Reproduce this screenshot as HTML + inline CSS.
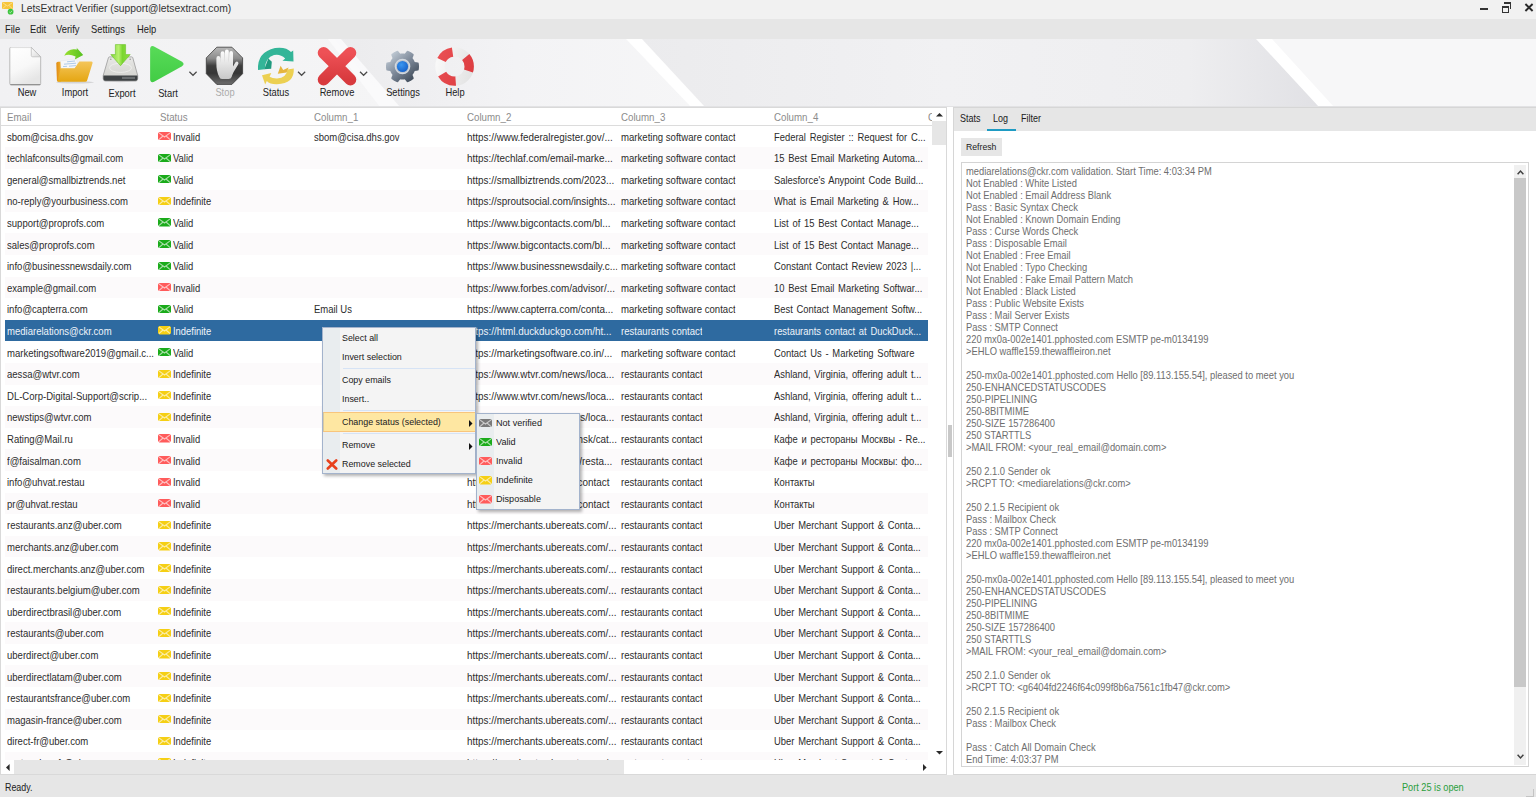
<!DOCTYPE html>
<html><head><meta charset="utf-8"><title>LetsExtract Verifier</title>
<style>
*{box-sizing:border-box;margin:0;padding:0}
html,body{width:1536px;height:797px;overflow:hidden;background:#f0f0f0;font-family:"Liberation Sans",sans-serif;color:#2c2c2c}
.abs{position:absolute}
#title{position:absolute;left:0;top:0;width:1536px;height:19px;background:#f1f1f1}
#title .t{position:absolute;left:21px;top:3px;font-size:10.3px;color:#333;white-space:nowrap}
#menu{position:absolute;left:0;top:19px;width:1536px;height:19.7px;background:#e6e6e6}
#menu span{position:absolute;top:4.1px;font-size:10.6px;color:#202020;transform:scaleX(0.885);transform-origin:0 0;white-space:nowrap}
#tb{position:absolute;left:0;top:38.7px;width:1536px;height:68.3px;background:#f2f2f4;border-bottom:1px solid #e2e2e4;overflow:hidden}
.lbl{position:absolute;top:47.3px;width:60px;text-align:center;font-size:10.6px;color:#222;white-space:nowrap;transform:scaleX(0.88);transform-origin:50% 0}
#grid{position:absolute;left:0;top:107px;width:947px;height:668px;background:#fff;border:1px solid #d9d9d9;overflow:hidden}
.hdr{position:absolute;top:2.6px;font-size:10.7px;color:#8c8c8c;white-space:nowrap;transform:scaleX(0.91);transform-origin:0 0}
#hline{position:absolute;left:0;top:17px;width:932px;height:1px;background:#dcdcdc}
.row{position:absolute;left:4.6px;width:923.4px;height:21.6px}
.row.alt{background:#fcfafb}
.row.sel{background:#2e6aa0;color:#eef4fa}
.c{position:absolute;top:6.15px;font-size:10.4px;white-space:nowrap;overflow:hidden;line-height:11px;transform-origin:0 0}
.c0{width:164px;transform:scaleX(0.918)}
.c2{transform:scaleX(0.913)}
.c3{width:158px;transform:scaleX(0.952)}
.c4{transform:scaleX(0.923)}
.c5{width:171px;word-spacing:1.3px;transform:scaleX(0.904)}
.env{position:absolute;left:0px;top:0.5px}
.stt{position:absolute;left:14.8px;top:0;transform:scaleX(0.904);transform-origin:0 0}
.row .c1{width:150px;height:13px;top:6px;font-size:9.4px}
.row .c1 .stt{font-size:10.4px;top:0.15px}
#vsb{position:absolute;left:931.4px;top:0;width:14px;height:652px;background:#fff}
#hsb{position:absolute;left:0;top:652px;width:931.4px;height:14px;background:#fff}
#split{position:absolute;left:947px;top:107px;width:6px;height:668px;background:#fff}
#panel{position:absolute;left:953px;top:107px;width:583px;height:668px;background:#fff;border-left:1px solid #d6d6d6;border-top:1px solid #d6d6d6;border-bottom:1px solid #d6d6d6}
#tabs{position:absolute;left:0;top:0;width:583px;height:23px;background:#e6e6e6}
#tabs span{position:absolute;top:5.2px;font-size:10.1px;color:#202020;white-space:nowrap;transform:scaleX(0.89);transform-origin:0 0}
#refresh{position:absolute;left:7px;top:30px;width:41px;height:18px;background:#e6e6e6;color:#202020}
#refresh span{position:absolute;left:5px;top:3.2px;font-size:9.9px;white-space:nowrap;transform:scaleX(0.88);transform-origin:0 0}
#log{position:absolute;left:7.4px;top:53.5px;width:568px;height:605.5px;border:1px solid #d4d4d4;background:#fff;overflow:hidden}
.ll{position:absolute;left:4px;margin-top:2.1px;font-size:10.7px;color:#6e6e6e;white-space:pre;line-height:12px;transform:scaleX(0.876);transform-origin:0 0}
#status{position:absolute;left:0;top:775px;width:1536px;height:22px;background:#e6e6e6}
#ctx{position:absolute;left:322px;top:327px;width:154px;height:147px;background:#f4f4f4;border:1px solid #a3b3cc;box-shadow:2px 2px 3px rgba(0,0,0,0.3)}
#ctx .ic{position:absolute;left:0;top:0;width:17px;height:145px;background:#e9edef}
.mi{position:absolute;left:19px;margin-top:-0.7px;font-size:9.9px;color:#202020;white-space:nowrap;transform:scaleX(0.9);transform-origin:0 0}
.sep{position:absolute;left:20px;width:132px;height:1px;background:#d6e3f5}
.hl{position:absolute;left:0;top:83.5px;width:152px;height:20.5px;background:#fee7a2;border-top:1px solid #f8c57c;border-bottom:1px solid #f8c57c;border-left:1px solid #d8c8a0}
#sub{position:absolute;left:476px;top:412.5px;width:104px;height:97px;background:#f4f4f4;border:1px solid #a3b3cc;box-shadow:2px 2px 3px rgba(0,0,0,0.3)}
#sub .ic{position:absolute;left:0;top:0;width:17px;height:95px;background:#e9edef}
.si{position:absolute;left:19px;margin-top:-1.5px;font-size:9.9px;color:#202020;white-space:nowrap;transform:scaleX(0.92);transform-origin:0 0}
</style></head><body>

<div id="title">
  <svg class="abs" style="left:2px;top:1px" width="14" height="14" viewBox="0 0 14 14">
    <rect x="0" y="1" width="11" height="7" rx="1" fill="#f7c53a"/>
    <path d="M0.8 1.8 L5.5 5 L10.2 1.8 M0.8 7.5 L4 4.5 M10.2 7.5 L7 4.5" stroke="#fbe6a0" stroke-width="0.8" fill="none"/>
    <circle cx="8.6" cy="10.7" r="2.9" fill="#3ec43e"/><path d="M7.3 10.9 L8.3 11.8 L10 9.8" stroke="#d8f5d8" stroke-width="0.7" fill="none"/>
  </svg>
  <div class="t">LetsExtract Verifier (support@letsextract.com)</div>
  <div class="abs" style="left:1480px;top:8px;width:8px;height:2px;background:#333"></div>
  <div class="abs" style="left:1504px;top:2px;width:7px;height:6.5px;border-top:2px solid #333;border-right:1.3px solid #333"></div>
  <div class="abs" style="left:1501.5px;top:6px;width:7.5px;height:7px;border:1.3px solid #333;border-top-width:2px;background:#f1f1f1"></div>
  <svg class="abs" style="left:1524px;top:3px" width="10" height="9" viewBox="0 0 10 9"><path d="M1.4 1 L8.6 8 M8.6 1 L1.4 8" stroke="#2a2a2a" stroke-width="1.9"/></svg>
</div>

<div id="menu">
  <span style="left:5px">File</span><span style="left:29.7px">Edit</span><span style="left:56.3px">Verify</span><span style="left:91.1px">Settings</span><span style="left:136.6px">Help</span>
</div>

<div id="tb">
<svg class="abs" style="left:0;top:0.3px" width="1536" height="68" viewBox="0 39 1536 68">
<defs>
  <linearGradient id="gBgL" x1="0" x2="1" y1="0" y2="0"><stop offset="0" stop-color="#f1f1f3"/><stop offset="1" stop-color="#f5f5f6"/></linearGradient>
  <linearGradient id="gBgM" x1="0" x2="1" y1="0" y2="0"><stop offset="0" stop-color="#ebebed"/><stop offset="0.5" stop-color="#f3f3f5"/><stop offset="1" stop-color="#f6f6f7"/></linearGradient>
  <linearGradient id="gBgR" x1="0" x2="1" y1="0" y2="0"><stop offset="0" stop-color="#ebebed"/><stop offset="0.45" stop-color="#f1f1f3"/><stop offset="0.8" stop-color="#eeeef0"/><stop offset="1" stop-color="#e0e0e4"/></linearGradient>
  <linearGradient id="gPage" x1="0" x2="0.4" y1="0" y2="1"><stop offset="0" stop-color="#ffffff"/><stop offset="0.6" stop-color="#f8f8f8"/><stop offset="1" stop-color="#e6e6e6"/></linearGradient>
  <linearGradient id="gFold" x1="0" x2="1" y1="0" y2="1"><stop offset="0" stop-color="#ffffff"/><stop offset="1" stop-color="#d8d8d8"/></linearGradient>
  <linearGradient id="gFolder" x1="0" x2="0" y1="0" y2="1"><stop offset="0" stop-color="#f4c55a"/><stop offset="1" stop-color="#e5a612"/></linearGradient>
  <linearGradient id="gFolderBack" x1="0" x2="1" y1="0" y2="0"><stop offset="0" stop-color="#e08a10"/><stop offset="1" stop-color="#f0b030"/></linearGradient>
  <linearGradient id="gGreenArr" x1="0" x2="1" y1="0" y2="0"><stop offset="0" stop-color="#9ae030"/><stop offset="1" stop-color="#55c020"/></linearGradient>
  <linearGradient id="gDrive" x1="0" x2="0" y1="0" y2="1"><stop offset="0" stop-color="#e8e8e6"/><stop offset="1" stop-color="#d0d0cc"/></linearGradient>
  <linearGradient id="gDown" x1="0" x2="1" y1="0" y2="0"><stop offset="0" stop-color="#7fd83a"/><stop offset="0.4" stop-color="#b8f070"/><stop offset="0.6" stop-color="#7ad630"/><stop offset="1" stop-color="#8ee040"/></linearGradient>
  <linearGradient id="gStart" x1="0" x2="0" y1="0" y2="1"><stop offset="0" stop-color="#58db58"/><stop offset="1" stop-color="#42cc45"/></linearGradient>
  <linearGradient id="gStop" x1="0" x2="0" y1="0" y2="1"><stop offset="0" stop-color="#b8b8b8"/><stop offset="0.3" stop-color="#8c8c8c"/><stop offset="0.5" stop-color="#3e3e3e"/><stop offset="0.7" stop-color="#363636"/><stop offset="1" stop-color="#6e6e6e"/></linearGradient>
  <linearGradient id="gHand" x1="0" x2="0" y1="0" y2="1"><stop offset="0" stop-color="#ffffff"/><stop offset="1" stop-color="#c8c8c8"/></linearGradient>
  <linearGradient id="gX" x1="0" x2="0" y1="0" y2="1"><stop offset="0" stop-color="#ee5156"/><stop offset="1" stop-color="#d83a3e"/></linearGradient>
  <linearGradient id="gGear" x1="0" x2="1" y1="0" y2="1"><stop offset="0" stop-color="#b8c4d0"/><stop offset="1" stop-color="#3e4a58"/></linearGradient>
  <linearGradient id="gGear2" gradientUnits="userSpaceOnUse" x1="-12" y1="-14" x2="12" y2="14"><stop offset="0" stop-color="#c4ced8"/><stop offset="0.5" stop-color="#7c8898"/><stop offset="1" stop-color="#3c4856"/></linearGradient>
  <linearGradient id="gBuoyW" gradientUnits="userSpaceOnUse" x1="-19" y1="0" x2="19" y2="10"><stop offset="0" stop-color="#f8f8f8"/><stop offset="1" stop-color="#e2e2e2"/></linearGradient>
  <linearGradient id="gBuoyR" gradientUnits="userSpaceOnUse" x1="-19" y1="-10" x2="19" y2="10"><stop offset="0" stop-color="#ea5054"/><stop offset="1" stop-color="#dc3c40"/></linearGradient>
  <radialGradient id="gBlue" cx="0.4" cy="0.35" r="0.7"><stop offset="0" stop-color="#3a96f0"/><stop offset="1" stop-color="#1660c8"/></radialGradient>
</defs>
<rect x="0" y="39" width="1536" height="68" fill="#f2f2f4"/>
<polygon points="0,39 334,39 390,107 0,107" fill="url(#gBgL)"/>
<polygon points="334,39 634,39 698,107 390,107" fill="url(#gBgM)"/>
<polygon points="634,39 1264,39 1327,107 698,107" fill="url(#gBgR)"/>
<polygon points="1264,39 1536,39 1536,107 1327,107" fill="#f7f7f8"/>
<polygon points="328,39 341,39 400,107 380,107" fill="#fbfbfc" opacity="0.9"/>
<polygon points="626,39 642,39 705,107 691,107" fill="#ffffff"/>
<polygon points="1256,39 1272,39 1334,107 1319,107" fill="#ffffff"/>

<!-- New -->
<path d="M10.5 47.5 H31.3 L40.7 56.8 V83.5 Q40.7 85 39.2 85 H11.3 Q9.8 85 9.8 83.5 V48.3 Q9.8 47.5 10.5 47.5 Z" fill="url(#gPage)" stroke="#b4b4b4" stroke-width="0.9"/>
<path d="M10.6 47.6 H31" stroke="#e4e4e4" stroke-width="1"/>
<path d="M10.3 84.6 H40.3" stroke="#8c8c8c" stroke-width="1"/>
<path d="M31.3 47.5 V55.5 Q31.3 56.8 32.6 56.8 H40.7 Z" fill="url(#gFold)" stroke="#b8b8b8" stroke-width="0.7"/>

<!-- Import -->
<ellipse cx="75" cy="82.3" rx="19" ry="1.2" fill="#000" opacity="0.12"/>
<path d="M56.3 63.5 Q56.3 61.8 58 61.8 H61 V81.5 H58 Q57 81.5 56.9 80 Z" fill="url(#gFolderBack)"/>
<path d="M60.5 61 L76.5 58.8 L78.5 68 L61 69 Z" fill="#f6f7f9" stroke="#dde0e4" stroke-width="0.4"/>
<path d="M67 61.8 L75 61 M64 64.2 L76 63.2 M63 66.6 L67 66.3 M69 66.2 L76 65.6" stroke="#9cbfe6" stroke-width="0.8"/>
<path d="M57.6 81.7 L60.8 68.2 L74.6 68.2 L79.3 61.6 L91.5 61.6 Q93 61.6 92.5 63.2 L87.2 80.2 Q86.8 81.7 85.3 81.7 Z" fill="url(#gFolder)"/>
<path d="M64.2 55.8 Q68 47.5 77.2 49.6 L76.4 47.6 L83.2 54.9 L74.8 59.4 L75.6 56.4 Q69 53.5 64.2 55.8 Z" fill="url(#gGreenArr)"/>

<!-- Export -->
<ellipse cx="120.5" cy="81" rx="17" ry="1.2" fill="#000" opacity="0.12"/>
<path d="M109.5 56.9 H131.7 Q132.5 56.9 132.8 57.8 L137.7 75.5 V78.8 Q137.7 80.8 135.7 80.8 H105.2 Q103.2 80.8 103.2 78.8 V75.5 L108.4 57.8 Q108.7 56.9 109.5 56.9 Z" fill="url(#gDrive)" stroke="#9a9a9a" stroke-width="0.8"/>
<path d="M103.4 75.4 H137.5 V78.8 Q137.5 80.8 135.5 80.8 H105.4 Q103.4 80.8 103.4 78.8 Z" fill="#3e4244"/>
<ellipse cx="120.5" cy="67.8" rx="11" ry="4.6" fill="none" stroke="#f6f6f4" stroke-width="0.8" opacity="0.8"/>
<circle cx="110.8" cy="59.2" r="0.8" fill="#9a9a9a"/><circle cx="130.2" cy="59.2" r="0.8" fill="#9a9a9a"/>
<rect x="122" y="76.8" width="13" height="2.2" fill="#6a6e70"/>
<path d="M115.4 44.6 H125.6 V54.6 H130.2 L120.5 65.7 L110.8 54.6 H115.4 Z" fill="url(#gDown)" stroke="#6cc02a" stroke-width="0.6"/>

<!-- Start -->
<path d="M150.1 49.8 Q150.1 44.3 155 46.9 L181.6 61.6 Q185.6 64.1 181.6 66.6 L155 81.3 Q150.1 83.9 150.1 78.4 Z" fill="url(#gStart)"/>
<path d="M189.4 71.8 L193 75.3 L196.6 71.8" fill="none" stroke="#4a4a4a" stroke-width="1.2"/>

<!-- Stop -->
<path d="M216.8 47.2 H231.9 L242.6 57.9 V73.7 L231.9 84.4 H216.8 L206.3 73.7 V57.9 Z" fill="url(#gStop)" stroke="#3a3a3a" stroke-width="0.8"/>
<path d="M219.2 76.8 Q216.2 71 216.4 63 V58.2 Q216.4 56 218.4 56 Q220.3 56 220.3 58.2 V63.5 L220.6 53.2 Q220.7 51.2 222.6 51.2 Q224.5 51.2 224.5 53.2 L224.6 62.5 L224.9 51.6 Q225 49.6 226.9 49.6 Q228.8 49.6 228.8 51.6 L228.9 62.5 L229.2 53 Q229.3 51 231.1 51 Q233 51 233 53 V66.5 L235.3 62.6 Q236.7 60.9 238 62 Q239 63 238 64.8 L233.6 72 Q232.4 74.5 231.6 77 Q230.9 79 228.6 79 H222 Q219.8 79 219.2 76.8 Z" fill="url(#gHand)"/>

<!-- Status -->
<path d="M258 70 Q257 52 275 48 Q286 46.5 291 52 L293.2 50.6 L293.5 61.6 L282.5 60.8 L285.2 58.4 Q280 53.5 274 55 Q265.5 57.5 264.7 69.2 Z" fill="#33b598"/>
<path d="M264.3 69.2 L268.3 58.6 L271.8 61.8 L271.2 68.8 Z" fill="#1f9a7e"/>
<path d="M293.8 68.6 Q294.5 84 277 84.2 Q270 84.4 266.8 81 L265.2 84.6 L262 75.2 L271.3 73 L269.6 76.7 Q272.5 78.6 277 78.5 Q286.5 78 287.5 69.5 Z" fill="#ecd052"/>
<path d="M277.8 73.8 L280.6 65.8 L283.2 70 L288.6 67.4 L286.6 72.6 Z" fill="#e6b53c"/>
<path d="M298 71.8 L301.6 75.3 L305.2 71.8" fill="none" stroke="#4a4a4a" stroke-width="1.2"/>

<!-- Remove -->
<path d="M323.6 52.8 L337 66.2 L350.4 52.8 M323.6 79.6 L337 66.2 L350.4 79.6" fill="none" stroke="url(#gX)" stroke-width="11.8" stroke-linecap="round" stroke-linejoin="round"/>
<path d="M360 71.8 L363.6 75.3 L367.2 71.8" fill="none" stroke="#4a4a4a" stroke-width="1.2"/>

<!-- Settings gear -->
<g transform="translate(402.5 66.5)">
  <path fill="url(#gGear2)" d="M16.50 0.00 L16.50 0.29 L16.49 0.58 L16.48 0.86 L16.46 1.15 L16.44 1.44 L16.41 1.72 L16.38 2.01 L16.34 2.30 L16.30 2.58 L16.25 2.87 L16.20 3.15 L16.14 3.43 L15.96 3.68 L15.58 3.88 L15.06 4.04 L14.46 4.15 L13.83 4.23 L13.23 4.30 L12.71 4.38 L12.33 4.49 L12.14 4.66 L12.05 4.87 L11.97 5.08 L11.88 5.29 L11.78 5.49 L11.68 5.70 L11.58 5.90 L11.48 6.10 L11.37 6.30 L11.26 6.50 L11.14 6.70 L11.02 6.89 L10.90 7.08 L10.78 7.27 L10.65 7.46 L10.52 7.64 L10.38 7.82 L10.24 8.00 L10.10 8.18 L10.05 8.43 L10.14 8.82 L10.34 9.31 L10.58 9.86 L10.82 10.45 L11.03 11.03 L11.16 11.55 L11.17 11.98 L11.04 12.26 L10.82 12.45 L10.61 12.64 L10.38 12.82 L10.16 13.00 L9.93 13.18 L9.70 13.35 L9.46 13.52 L9.23 13.68 L8.99 13.84 L8.74 13.99 L8.50 14.14 L8.25 14.29 L8.00 14.43 L7.75 14.57 L7.49 14.70 L7.23 14.83 L6.97 14.95 L6.71 15.07 L6.45 15.19 L6.18 15.30 L5.91 15.40 L5.64 15.50 L5.37 15.60 L5.10 15.69 L4.79 15.66 L4.43 15.44 L4.04 15.06 L3.64 14.59 L3.25 14.09 L2.89 13.60 L2.56 13.19 L2.28 12.92 L2.03 12.84 L1.81 12.87 L1.58 12.90 L1.36 12.93 L1.13 12.95 L0.91 12.97 L0.68 12.98 L0.45 12.99 L0.23 13.00 L0.00 13.00 L-0.23 13.00 L-0.45 12.99 L-0.68 12.98 L-0.91 12.97 L-1.13 12.95 L-1.36 12.93 L-1.58 12.90 L-1.81 12.87 L-2.03 12.84 L-2.28 12.92 L-2.56 13.19 L-2.89 13.60 L-3.25 14.09 L-3.64 14.59 L-4.04 15.06 L-4.43 15.44 L-4.79 15.66 L-5.10 15.69 L-5.37 15.60 L-5.64 15.50 L-5.91 15.40 L-6.18 15.30 L-6.45 15.19 L-6.71 15.07 L-6.97 14.95 L-7.23 14.83 L-7.49 14.70 L-7.75 14.57 L-8.00 14.43 L-8.25 14.29 L-8.50 14.14 L-8.74 13.99 L-8.99 13.84 L-9.23 13.68 L-9.46 13.52 L-9.70 13.35 L-9.93 13.18 L-10.16 13.00 L-10.38 12.82 L-10.61 12.64 L-10.82 12.45 L-11.04 12.26 L-11.17 11.98 L-11.16 11.55 L-11.03 11.03 L-10.82 10.45 L-10.58 9.86 L-10.34 9.31 L-10.14 8.82 L-10.05 8.43 L-10.10 8.18 L-10.24 8.00 L-10.38 7.82 L-10.52 7.64 L-10.65 7.46 L-10.78 7.27 L-10.90 7.08 L-11.02 6.89 L-11.14 6.70 L-11.26 6.50 L-11.37 6.30 L-11.48 6.10 L-11.58 5.90 L-11.68 5.70 L-11.78 5.49 L-11.88 5.29 L-11.97 5.08 L-12.05 4.87 L-12.14 4.66 L-12.33 4.49 L-12.71 4.38 L-13.23 4.30 L-13.83 4.23 L-14.46 4.15 L-15.06 4.04 L-15.58 3.88 L-15.96 3.68 L-16.14 3.43 L-16.20 3.15 L-16.25 2.87 L-16.30 2.58 L-16.34 2.30 L-16.38 2.01 L-16.41 1.72 L-16.44 1.44 L-16.46 1.15 L-16.48 0.86 L-16.49 0.58 L-16.50 0.29 L-16.50 0.00 L-16.50 -0.29 L-16.49 -0.58 L-16.48 -0.86 L-16.46 -1.15 L-16.44 -1.44 L-16.41 -1.72 L-16.38 -2.01 L-16.34 -2.30 L-16.30 -2.58 L-16.25 -2.87 L-16.20 -3.15 L-16.14 -3.43 L-15.96 -3.68 L-15.58 -3.88 L-15.06 -4.04 L-14.46 -4.15 L-13.83 -4.23 L-13.23 -4.30 L-12.71 -4.38 L-12.33 -4.49 L-12.14 -4.66 L-12.05 -4.87 L-11.97 -5.08 L-11.88 -5.29 L-11.78 -5.49 L-11.68 -5.70 L-11.58 -5.90 L-11.48 -6.10 L-11.37 -6.30 L-11.26 -6.50 L-11.14 -6.70 L-11.02 -6.89 L-10.90 -7.08 L-10.78 -7.27 L-10.65 -7.46 L-10.52 -7.64 L-10.38 -7.82 L-10.24 -8.00 L-10.10 -8.18 L-10.05 -8.43 L-10.14 -8.82 L-10.34 -9.31 L-10.58 -9.86 L-10.82 -10.45 L-11.03 -11.03 L-11.16 -11.55 L-11.17 -11.98 L-11.04 -12.26 L-10.82 -12.45 L-10.61 -12.64 L-10.38 -12.82 L-10.16 -13.00 L-9.93 -13.18 L-9.70 -13.35 L-9.46 -13.52 L-9.23 -13.68 L-8.99 -13.84 L-8.74 -13.99 L-8.50 -14.14 L-8.25 -14.29 L-8.00 -14.43 L-7.75 -14.57 L-7.49 -14.70 L-7.23 -14.83 L-6.97 -14.95 L-6.71 -15.07 L-6.45 -15.19 L-6.18 -15.30 L-5.91 -15.40 L-5.64 -15.50 L-5.37 -15.60 L-5.10 -15.69 L-4.79 -15.66 L-4.43 -15.44 L-4.04 -15.06 L-3.64 -14.59 L-3.25 -14.09 L-2.89 -13.60 L-2.56 -13.19 L-2.28 -12.92 L-2.03 -12.84 L-1.81 -12.87 L-1.58 -12.90 L-1.36 -12.93 L-1.13 -12.95 L-0.91 -12.97 L-0.68 -12.98 L-0.45 -12.99 L-0.23 -13.00 L-0.00 -13.00 L0.23 -13.00 L0.45 -12.99 L0.68 -12.98 L0.91 -12.97 L1.13 -12.95 L1.36 -12.93 L1.58 -12.90 L1.81 -12.87 L2.03 -12.84 L2.28 -12.92 L2.56 -13.19 L2.89 -13.60 L3.25 -14.09 L3.64 -14.59 L4.04 -15.06 L4.43 -15.44 L4.79 -15.66 L5.10 -15.69 L5.37 -15.60 L5.64 -15.50 L5.91 -15.40 L6.18 -15.30 L6.45 -15.19 L6.71 -15.07 L6.97 -14.95 L7.23 -14.83 L7.49 -14.70 L7.75 -14.57 L8.00 -14.43 L8.25 -14.29 L8.50 -14.14 L8.74 -13.99 L8.99 -13.84 L9.23 -13.68 L9.46 -13.52 L9.70 -13.35 L9.93 -13.18 L10.16 -13.00 L10.38 -12.82 L10.61 -12.64 L10.82 -12.45 L11.04 -12.26 L11.17 -11.98 L11.16 -11.55 L11.03 -11.03 L10.82 -10.45 L10.58 -9.86 L10.34 -9.31 L10.14 -8.82 L10.05 -8.43 L10.10 -8.18 L10.24 -8.00 L10.38 -7.82 L10.52 -7.64 L10.65 -7.46 L10.78 -7.27 L10.90 -7.08 L11.02 -6.89 L11.14 -6.70 L11.26 -6.50 L11.37 -6.30 L11.48 -6.10 L11.58 -5.90 L11.68 -5.70 L11.78 -5.49 L11.88 -5.29 L11.97 -5.08 L12.05 -4.87 L12.14 -4.66 L12.33 -4.49 L12.71 -4.38 L13.23 -4.30 L13.83 -4.23 L14.46 -4.15 L15.06 -4.04 L15.58 -3.88 L15.96 -3.68 L16.14 -3.43 L16.20 -3.15 L16.25 -2.87 L16.30 -2.58 L16.34 -2.30 L16.38 -2.01 L16.41 -1.72 L16.44 -1.44 L16.46 -1.15 L16.48 -0.86 L16.49 -0.58 L16.50 -0.29 Z"/>
  <circle r="7.8" fill="#d3d9e0"/>
  <circle r="6.6" fill="#bcc5cf"/>
  <circle r="5.6" fill="url(#gBlue)"/>
</g>

<!-- Help lifebuoy -->
<g transform="translate(454.6 66.5)">
  <circle r="14.6" fill="none" stroke="url(#gBuoyW)" stroke-width="9.4"/>
  <circle r="14.6" fill="none" stroke="url(#gBuoyR)" stroke-width="9.4" stroke-dasharray="4.66 17.0 15.98 14.60 14.01 14.68 10.80 0"/>
</g>
</svg>
<span class="lbl" style="left:-3.5px;top:47.3px">New</span><span class="lbl" style="left:45.0px;top:47.3px">Import</span><span class="lbl" style="left:91.5px;top:48.8px">Export</span><span class="lbl" style="left:137.5px;top:48.8px">Start</span><span class="lbl" style="left:194.5px;top:47.3px;color:#ababab">Stop</span><span class="lbl" style="left:246.0px;top:47.3px">Status</span><span class="lbl" style="left:307.4px;top:47.3px">Remove</span><span class="lbl" style="left:372.5px;top:47.3px">Settings</span><span class="lbl" style="left:425.0px;top:47.3px">Help</span>
</div>

<div id="grid">
  <span class="hdr" style="left:6px">Email</span>
  <span class="hdr" style="left:159px">Status</span>
  <span class="hdr" style="left:312.6px">Column_1</span>
  <span class="hdr" style="left:466.2px">Column_2</span>
  <span class="hdr" style="left:619.8px">Column_3</span>
  <span class="hdr" style="left:773.4px">Column_4</span>
  <span class="hdr" style="left:927px;width:5px;overflow:hidden">Column_5</span>
  <div id="hline"></div>
  <div id="rows" class="abs" style="left:-1px;top:-108px;width:948px;height:760px">
<div class="row" style="top:125.4px"><span class="c c0" style="left:2.4px">sbom@cisa.dhs.gov</span><span class="c c1" style="left:153.9px"><svg class="env" width="13" height="8.4" viewBox="0 0 13 8.4"><path d="M1.3 0 H11.7 L13 1.3 V7.1 L11.7 8.4 H1.3 L0 7.1 V1.3 Z" fill="#ff5b5b"/><path d="M0.9 0.9 L6.5 5 L12.1 0.9 M0.9 7.6 L5 4 M12.1 7.6 L8 4" stroke="#fff" stroke-opacity="0.62" stroke-width="1.15" fill="none"/></svg><span class="stt">Invalid</span></span><span class="c c2" style="left:309.0px">sbom@cisa.dhs.gov</span><span class="c c3" style="left:462.6px">https://www.federalregister.gov/...</span><span class="c c4" style="left:616.2px">marketing software contact</span><span class="c c5" style="left:769.8px">Federal Register :: Request for C...</span></div>
<div class="row alt" style="top:147.0px"><span class="c c0" style="left:2.4px">techlafconsults@gmail.com</span><span class="c c1" style="left:153.9px"><svg class="env" width="13" height="8.4" viewBox="0 0 13 8.4"><path d="M1.3 0 H11.7 L13 1.3 V7.1 L11.7 8.4 H1.3 L0 7.1 V1.3 Z" fill="#1aab1a"/><path d="M0.9 0.9 L6.5 5 L12.1 0.9 M0.9 7.6 L5 4 M12.1 7.6 L8 4" stroke="#fff" stroke-opacity="0.62" stroke-width="1.15" fill="none"/></svg><span class="stt">Valid</span></span><span class="c c3" style="left:462.6px">https://techlaf.com/email-marke...</span><span class="c c4" style="left:616.2px">marketing software contact</span><span class="c c5" style="left:769.8px">15 Best Email Marketing Automa...</span></div>
<div class="row" style="top:168.6px"><span class="c c0" style="left:2.4px">general@smallbiztrends.net</span><span class="c c1" style="left:153.9px"><svg class="env" width="13" height="8.4" viewBox="0 0 13 8.4"><path d="M1.3 0 H11.7 L13 1.3 V7.1 L11.7 8.4 H1.3 L0 7.1 V1.3 Z" fill="#1aab1a"/><path d="M0.9 0.9 L6.5 5 L12.1 0.9 M0.9 7.6 L5 4 M12.1 7.6 L8 4" stroke="#fff" stroke-opacity="0.62" stroke-width="1.15" fill="none"/></svg><span class="stt">Valid</span></span><span class="c c3" style="left:462.6px">https://smallbiztrends.com/2023...</span><span class="c c4" style="left:616.2px">marketing software contact</span><span class="c c5" style="left:769.8px">Salesforce's Anypoint Code Build...</span></div>
<div class="row alt" style="top:190.2px"><span class="c c0" style="left:2.4px">no-reply@yourbusiness.com</span><span class="c c1" style="left:153.9px"><svg class="env" width="13" height="8.4" viewBox="0 0 13 8.4"><path d="M1.3 0 H11.7 L13 1.3 V7.1 L11.7 8.4 H1.3 L0 7.1 V1.3 Z" fill="#f5cf14"/><path d="M0.9 0.9 L6.5 5 L12.1 0.9 M0.9 7.6 L5 4 M12.1 7.6 L8 4" stroke="#fff" stroke-opacity="0.62" stroke-width="1.15" fill="none"/></svg><span class="stt">Indefinite</span></span><span class="c c3" style="left:462.6px">https://sproutsocial.com/insights...</span><span class="c c4" style="left:616.2px">marketing software contact</span><span class="c c5" style="left:769.8px">What is Email Marketing &amp; How...</span></div>
<div class="row" style="top:211.8px"><span class="c c0" style="left:2.4px">support@proprofs.com</span><span class="c c1" style="left:153.9px"><svg class="env" width="13" height="8.4" viewBox="0 0 13 8.4"><path d="M1.3 0 H11.7 L13 1.3 V7.1 L11.7 8.4 H1.3 L0 7.1 V1.3 Z" fill="#1aab1a"/><path d="M0.9 0.9 L6.5 5 L12.1 0.9 M0.9 7.6 L5 4 M12.1 7.6 L8 4" stroke="#fff" stroke-opacity="0.62" stroke-width="1.15" fill="none"/></svg><span class="stt">Valid</span></span><span class="c c3" style="left:462.6px">https://www.bigcontacts.com/bl...</span><span class="c c4" style="left:616.2px">marketing software contact</span><span class="c c5" style="left:769.8px">List of 15 Best Contact Manage...</span></div>
<div class="row alt" style="top:233.4px"><span class="c c0" style="left:2.4px">sales@proprofs.com</span><span class="c c1" style="left:153.9px"><svg class="env" width="13" height="8.4" viewBox="0 0 13 8.4"><path d="M1.3 0 H11.7 L13 1.3 V7.1 L11.7 8.4 H1.3 L0 7.1 V1.3 Z" fill="#1aab1a"/><path d="M0.9 0.9 L6.5 5 L12.1 0.9 M0.9 7.6 L5 4 M12.1 7.6 L8 4" stroke="#fff" stroke-opacity="0.62" stroke-width="1.15" fill="none"/></svg><span class="stt">Valid</span></span><span class="c c3" style="left:462.6px">https://www.bigcontacts.com/bl...</span><span class="c c4" style="left:616.2px">marketing software contact</span><span class="c c5" style="left:769.8px">List of 15 Best Contact Manage...</span></div>
<div class="row" style="top:255.0px"><span class="c c0" style="left:2.4px">info@businessnewsdaily.com</span><span class="c c1" style="left:153.9px"><svg class="env" width="13" height="8.4" viewBox="0 0 13 8.4"><path d="M1.3 0 H11.7 L13 1.3 V7.1 L11.7 8.4 H1.3 L0 7.1 V1.3 Z" fill="#1aab1a"/><path d="M0.9 0.9 L6.5 5 L12.1 0.9 M0.9 7.6 L5 4 M12.1 7.6 L8 4" stroke="#fff" stroke-opacity="0.62" stroke-width="1.15" fill="none"/></svg><span class="stt">Valid</span></span><span class="c c3" style="left:462.6px">https://www.businessnewsdaily.c...</span><span class="c c4" style="left:616.2px">marketing software contact</span><span class="c c5" style="left:769.8px">Constant Contact Review 2023 |...</span></div>
<div class="row alt" style="top:276.6px"><span class="c c0" style="left:2.4px">example@gmail.com</span><span class="c c1" style="left:153.9px"><svg class="env" width="13" height="8.4" viewBox="0 0 13 8.4"><path d="M1.3 0 H11.7 L13 1.3 V7.1 L11.7 8.4 H1.3 L0 7.1 V1.3 Z" fill="#ff5b5b"/><path d="M0.9 0.9 L6.5 5 L12.1 0.9 M0.9 7.6 L5 4 M12.1 7.6 L8 4" stroke="#fff" stroke-opacity="0.62" stroke-width="1.15" fill="none"/></svg><span class="stt">Invalid</span></span><span class="c c3" style="left:462.6px">https://www.forbes.com/advisor/...</span><span class="c c4" style="left:616.2px">marketing software contact</span><span class="c c5" style="left:769.8px">10 Best Email Marketing Softwar...</span></div>
<div class="row" style="top:298.2px"><span class="c c0" style="left:2.4px">info@capterra.com</span><span class="c c1" style="left:153.9px"><svg class="env" width="13" height="8.4" viewBox="0 0 13 8.4"><path d="M1.3 0 H11.7 L13 1.3 V7.1 L11.7 8.4 H1.3 L0 7.1 V1.3 Z" fill="#1aab1a"/><path d="M0.9 0.9 L6.5 5 L12.1 0.9 M0.9 7.6 L5 4 M12.1 7.6 L8 4" stroke="#fff" stroke-opacity="0.62" stroke-width="1.15" fill="none"/></svg><span class="stt">Valid</span></span><span class="c c2" style="left:309.0px">Email Us</span><span class="c c3" style="left:462.6px">https://www.capterra.com/conta...</span><span class="c c4" style="left:616.2px">marketing software contact</span><span class="c c5" style="left:769.8px">Best Contact Management Softw...</span></div>
<div class="row sel" style="top:319.8px"><span class="c c0" style="left:2.4px">mediarelations@ckr.com</span><span class="c c1" style="left:153.9px"><svg class="env" width="13" height="8.4" viewBox="0 0 13 8.4"><path d="M1.3 0 H11.7 L13 1.3 V7.1 L11.7 8.4 H1.3 L0 7.1 V1.3 Z" fill="#f5cf14"/><path d="M0.9 0.9 L6.5 5 L12.1 0.9 M0.9 7.6 L5 4 M12.1 7.6 L8 4" stroke="#fff" stroke-opacity="0.62" stroke-width="1.15" fill="none"/></svg><span class="stt">Indefinite</span></span><span class="c c3" style="left:462.6px">https://html.duckduckgo.com/ht...</span><span class="c c4" style="left:616.2px">restaurants contact</span><span class="c c5" style="left:769.8px">restaurants contact at DuckDuck...</span></div>
<div class="row" style="top:341.4px"><span class="c c0" style="left:2.4px">marketingsoftware2019@gmail.c...</span><span class="c c1" style="left:153.9px"><svg class="env" width="13" height="8.4" viewBox="0 0 13 8.4"><path d="M1.3 0 H11.7 L13 1.3 V7.1 L11.7 8.4 H1.3 L0 7.1 V1.3 Z" fill="#1aab1a"/><path d="M0.9 0.9 L6.5 5 L12.1 0.9 M0.9 7.6 L5 4 M12.1 7.6 L8 4" stroke="#fff" stroke-opacity="0.62" stroke-width="1.15" fill="none"/></svg><span class="stt">Valid</span></span><span class="c c3" style="left:462.6px">https://marketingsoftware.co.in/...</span><span class="c c4" style="left:616.2px">marketing software contact</span><span class="c c5" style="left:769.8px">Contact Us - Marketing Software</span></div>
<div class="row alt" style="top:363.0px"><span class="c c0" style="left:2.4px">aessa@wtvr.com</span><span class="c c1" style="left:153.9px"><svg class="env" width="13" height="8.4" viewBox="0 0 13 8.4"><path d="M1.3 0 H11.7 L13 1.3 V7.1 L11.7 8.4 H1.3 L0 7.1 V1.3 Z" fill="#f5cf14"/><path d="M0.9 0.9 L6.5 5 L12.1 0.9 M0.9 7.6 L5 4 M12.1 7.6 L8 4" stroke="#fff" stroke-opacity="0.62" stroke-width="1.15" fill="none"/></svg><span class="stt">Indefinite</span></span><span class="c c3" style="left:462.6px">https://www.wtvr.com/news/loca...</span><span class="c c4" style="left:616.2px">restaurants contact</span><span class="c c5" style="left:769.8px">Ashland, Virginia, offering adult t...</span></div>
<div class="row" style="top:384.6px"><span class="c c0" style="left:2.4px">DL-Corp-Digital-Support@scrip...</span><span class="c c1" style="left:153.9px"><svg class="env" width="13" height="8.4" viewBox="0 0 13 8.4"><path d="M1.3 0 H11.7 L13 1.3 V7.1 L11.7 8.4 H1.3 L0 7.1 V1.3 Z" fill="#f5cf14"/><path d="M0.9 0.9 L6.5 5 L12.1 0.9 M0.9 7.6 L5 4 M12.1 7.6 L8 4" stroke="#fff" stroke-opacity="0.62" stroke-width="1.15" fill="none"/></svg><span class="stt">Indefinite</span></span><span class="c c3" style="left:462.6px">https://www.wtvr.com/news/loca...</span><span class="c c4" style="left:616.2px">restaurants contact</span><span class="c c5" style="left:769.8px">Ashland, Virginia, offering adult t...</span></div>
<div class="row alt" style="top:406.2px"><span class="c c0" style="left:2.4px">newstips@wtvr.com</span><span class="c c1" style="left:153.9px"><svg class="env" width="13" height="8.4" viewBox="0 0 13 8.4"><path d="M1.3 0 H11.7 L13 1.3 V7.1 L11.7 8.4 H1.3 L0 7.1 V1.3 Z" fill="#f5cf14"/><path d="M0.9 0.9 L6.5 5 L12.1 0.9 M0.9 7.6 L5 4 M12.1 7.6 L8 4" stroke="#fff" stroke-opacity="0.62" stroke-width="1.15" fill="none"/></svg><span class="stt">Indefinite</span></span><span class="c c3" style="left:462.6px">https://www.wtvr.com/news/loca...</span><span class="c c4" style="left:616.2px">restaurants contact</span><span class="c c5" style="left:769.8px">Ashland, Virginia, offering adult t...</span></div>
<div class="row" style="top:427.8px"><span class="c c0" style="left:2.4px">Rating@Mail.ru</span><span class="c c1" style="left:153.9px"><svg class="env" width="13" height="8.4" viewBox="0 0 13 8.4"><path d="M1.3 0 H11.7 L13 1.3 V7.1 L11.7 8.4 H1.3 L0 7.1 V1.3 Z" fill="#ff5b5b"/><path d="M0.9 0.9 L6.5 5 L12.1 0.9 M0.9 7.6 L5 4 M12.1 7.6 L8 4" stroke="#fff" stroke-opacity="0.62" stroke-width="1.15" fill="none"/></svg><span class="stt">Invalid</span></span><span class="c c3" style="left:462.6px">https://www.restoclub.ru/msk/cat...</span><span class="c c4" style="left:616.2px">restaurants contact</span><span class="c c5" style="left:769.8px">Кафе и рестораны Москвы - Re...</span></div>
<div class="row alt" style="top:449.4px"><span class="c c0" style="left:2.4px">f@faisalman.com</span><span class="c c1" style="left:153.9px"><svg class="env" width="13" height="8.4" viewBox="0 0 13 8.4"><path d="M1.3 0 H11.7 L13 1.3 V7.1 L11.7 8.4 H1.3 L0 7.1 V1.3 Z" fill="#ff5b5b"/><path d="M0.9 0.9 L6.5 5 L12.1 0.9 M0.9 7.6 L5 4 M12.1 7.6 L8 4" stroke="#fff" stroke-opacity="0.62" stroke-width="1.15" fill="none"/></svg><span class="stt">Invalid</span></span><span class="c c3" style="left:462.6px">https://www.afisha.ru/msk/resta...</span><span class="c c4" style="left:616.2px">restaurants contact</span><span class="c c5" style="left:769.8px">Кафе и рестораны Москвы: фо...</span></div>
<div class="row" style="top:471.0px"><span class="c c0" style="left:2.4px">info@uhvat.restau</span><span class="c c1" style="left:153.9px"><svg class="env" width="13" height="8.4" viewBox="0 0 13 8.4"><path d="M1.3 0 H11.7 L13 1.3 V7.1 L11.7 8.4 H1.3 L0 7.1 V1.3 Z" fill="#ff5b5b"/><path d="M0.9 0.9 L6.5 5 L12.1 0.9 M0.9 7.6 L5 4 M12.1 7.6 L8 4" stroke="#fff" stroke-opacity="0.62" stroke-width="1.15" fill="none"/></svg><span class="stt">Invalid</span></span><span class="c c3" style="left:462.6px">https://www.uhvat.restau/contact</span><span class="c c4" style="left:616.2px">restaurants contact</span><span class="c c5" style="left:769.8px">Контакты</span></div>
<div class="row alt" style="top:492.6px"><span class="c c0" style="left:2.4px">pr@uhvat.restau</span><span class="c c1" style="left:153.9px"><svg class="env" width="13" height="8.4" viewBox="0 0 13 8.4"><path d="M1.3 0 H11.7 L13 1.3 V7.1 L11.7 8.4 H1.3 L0 7.1 V1.3 Z" fill="#ff5b5b"/><path d="M0.9 0.9 L6.5 5 L12.1 0.9 M0.9 7.6 L5 4 M12.1 7.6 L8 4" stroke="#fff" stroke-opacity="0.62" stroke-width="1.15" fill="none"/></svg><span class="stt">Invalid</span></span><span class="c c3" style="left:462.6px">https://www.uhvat.restau/contact</span><span class="c c4" style="left:616.2px">restaurants contact</span><span class="c c5" style="left:769.8px">Контакты</span></div>
<div class="row" style="top:514.2px"><span class="c c0" style="left:2.4px">restaurants.anz@uber.com</span><span class="c c1" style="left:153.9px"><svg class="env" width="13" height="8.4" viewBox="0 0 13 8.4"><path d="M1.3 0 H11.7 L13 1.3 V7.1 L11.7 8.4 H1.3 L0 7.1 V1.3 Z" fill="#f5cf14"/><path d="M0.9 0.9 L6.5 5 L12.1 0.9 M0.9 7.6 L5 4 M12.1 7.6 L8 4" stroke="#fff" stroke-opacity="0.62" stroke-width="1.15" fill="none"/></svg><span class="stt">Indefinite</span></span><span class="c c3" style="left:462.6px">https://merchants.ubereats.com/...</span><span class="c c4" style="left:616.2px">restaurants contact</span><span class="c c5" style="left:769.8px">Uber Merchant Support &amp; Conta...</span></div>
<div class="row alt" style="top:535.8px"><span class="c c0" style="left:2.4px">merchants.anz@uber.com</span><span class="c c1" style="left:153.9px"><svg class="env" width="13" height="8.4" viewBox="0 0 13 8.4"><path d="M1.3 0 H11.7 L13 1.3 V7.1 L11.7 8.4 H1.3 L0 7.1 V1.3 Z" fill="#f5cf14"/><path d="M0.9 0.9 L6.5 5 L12.1 0.9 M0.9 7.6 L5 4 M12.1 7.6 L8 4" stroke="#fff" stroke-opacity="0.62" stroke-width="1.15" fill="none"/></svg><span class="stt">Indefinite</span></span><span class="c c3" style="left:462.6px">https://merchants.ubereats.com/...</span><span class="c c4" style="left:616.2px">restaurants contact</span><span class="c c5" style="left:769.8px">Uber Merchant Support &amp; Conta...</span></div>
<div class="row" style="top:557.4px"><span class="c c0" style="left:2.4px">direct.merchants.anz@uber.com</span><span class="c c1" style="left:153.9px"><svg class="env" width="13" height="8.4" viewBox="0 0 13 8.4"><path d="M1.3 0 H11.7 L13 1.3 V7.1 L11.7 8.4 H1.3 L0 7.1 V1.3 Z" fill="#f5cf14"/><path d="M0.9 0.9 L6.5 5 L12.1 0.9 M0.9 7.6 L5 4 M12.1 7.6 L8 4" stroke="#fff" stroke-opacity="0.62" stroke-width="1.15" fill="none"/></svg><span class="stt">Indefinite</span></span><span class="c c3" style="left:462.6px">https://merchants.ubereats.com/...</span><span class="c c4" style="left:616.2px">restaurants contact</span><span class="c c5" style="left:769.8px">Uber Merchant Support &amp; Conta...</span></div>
<div class="row alt" style="top:579.0px"><span class="c c0" style="left:2.4px">restaurants.belgium@uber.com</span><span class="c c1" style="left:153.9px"><svg class="env" width="13" height="8.4" viewBox="0 0 13 8.4"><path d="M1.3 0 H11.7 L13 1.3 V7.1 L11.7 8.4 H1.3 L0 7.1 V1.3 Z" fill="#f5cf14"/><path d="M0.9 0.9 L6.5 5 L12.1 0.9 M0.9 7.6 L5 4 M12.1 7.6 L8 4" stroke="#fff" stroke-opacity="0.62" stroke-width="1.15" fill="none"/></svg><span class="stt">Indefinite</span></span><span class="c c3" style="left:462.6px">https://merchants.ubereats.com/...</span><span class="c c4" style="left:616.2px">restaurants contact</span><span class="c c5" style="left:769.8px">Uber Merchant Support &amp; Conta...</span></div>
<div class="row" style="top:600.6px"><span class="c c0" style="left:2.4px">uberdirectbrasil@uber.com</span><span class="c c1" style="left:153.9px"><svg class="env" width="13" height="8.4" viewBox="0 0 13 8.4"><path d="M1.3 0 H11.7 L13 1.3 V7.1 L11.7 8.4 H1.3 L0 7.1 V1.3 Z" fill="#f5cf14"/><path d="M0.9 0.9 L6.5 5 L12.1 0.9 M0.9 7.6 L5 4 M12.1 7.6 L8 4" stroke="#fff" stroke-opacity="0.62" stroke-width="1.15" fill="none"/></svg><span class="stt">Indefinite</span></span><span class="c c3" style="left:462.6px">https://merchants.ubereats.com/...</span><span class="c c4" style="left:616.2px">restaurants contact</span><span class="c c5" style="left:769.8px">Uber Merchant Support &amp; Conta...</span></div>
<div class="row alt" style="top:622.2px"><span class="c c0" style="left:2.4px">restaurants@uber.com</span><span class="c c1" style="left:153.9px"><svg class="env" width="13" height="8.4" viewBox="0 0 13 8.4"><path d="M1.3 0 H11.7 L13 1.3 V7.1 L11.7 8.4 H1.3 L0 7.1 V1.3 Z" fill="#f5cf14"/><path d="M0.9 0.9 L6.5 5 L12.1 0.9 M0.9 7.6 L5 4 M12.1 7.6 L8 4" stroke="#fff" stroke-opacity="0.62" stroke-width="1.15" fill="none"/></svg><span class="stt">Indefinite</span></span><span class="c c3" style="left:462.6px">https://merchants.ubereats.com/...</span><span class="c c4" style="left:616.2px">restaurants contact</span><span class="c c5" style="left:769.8px">Uber Merchant Support &amp; Conta...</span></div>
<div class="row" style="top:643.8px"><span class="c c0" style="left:2.4px">uberdirect@uber.com</span><span class="c c1" style="left:153.9px"><svg class="env" width="13" height="8.4" viewBox="0 0 13 8.4"><path d="M1.3 0 H11.7 L13 1.3 V7.1 L11.7 8.4 H1.3 L0 7.1 V1.3 Z" fill="#f5cf14"/><path d="M0.9 0.9 L6.5 5 L12.1 0.9 M0.9 7.6 L5 4 M12.1 7.6 L8 4" stroke="#fff" stroke-opacity="0.62" stroke-width="1.15" fill="none"/></svg><span class="stt">Indefinite</span></span><span class="c c3" style="left:462.6px">https://merchants.ubereats.com/...</span><span class="c c4" style="left:616.2px">restaurants contact</span><span class="c c5" style="left:769.8px">Uber Merchant Support &amp; Conta...</span></div>
<div class="row alt" style="top:665.4px"><span class="c c0" style="left:2.4px">uberdirectlatam@uber.com</span><span class="c c1" style="left:153.9px"><svg class="env" width="13" height="8.4" viewBox="0 0 13 8.4"><path d="M1.3 0 H11.7 L13 1.3 V7.1 L11.7 8.4 H1.3 L0 7.1 V1.3 Z" fill="#f5cf14"/><path d="M0.9 0.9 L6.5 5 L12.1 0.9 M0.9 7.6 L5 4 M12.1 7.6 L8 4" stroke="#fff" stroke-opacity="0.62" stroke-width="1.15" fill="none"/></svg><span class="stt">Indefinite</span></span><span class="c c3" style="left:462.6px">https://merchants.ubereats.com/...</span><span class="c c4" style="left:616.2px">restaurants contact</span><span class="c c5" style="left:769.8px">Uber Merchant Support &amp; Conta...</span></div>
<div class="row" style="top:687.0px"><span class="c c0" style="left:2.4px">restaurantsfrance@uber.com</span><span class="c c1" style="left:153.9px"><svg class="env" width="13" height="8.4" viewBox="0 0 13 8.4"><path d="M1.3 0 H11.7 L13 1.3 V7.1 L11.7 8.4 H1.3 L0 7.1 V1.3 Z" fill="#f5cf14"/><path d="M0.9 0.9 L6.5 5 L12.1 0.9 M0.9 7.6 L5 4 M12.1 7.6 L8 4" stroke="#fff" stroke-opacity="0.62" stroke-width="1.15" fill="none"/></svg><span class="stt">Indefinite</span></span><span class="c c3" style="left:462.6px">https://merchants.ubereats.com/...</span><span class="c c4" style="left:616.2px">restaurants contact</span><span class="c c5" style="left:769.8px">Uber Merchant Support &amp; Conta...</span></div>
<div class="row alt" style="top:708.6px"><span class="c c0" style="left:2.4px">magasin-france@uber.com</span><span class="c c1" style="left:153.9px"><svg class="env" width="13" height="8.4" viewBox="0 0 13 8.4"><path d="M1.3 0 H11.7 L13 1.3 V7.1 L11.7 8.4 H1.3 L0 7.1 V1.3 Z" fill="#f5cf14"/><path d="M0.9 0.9 L6.5 5 L12.1 0.9 M0.9 7.6 L5 4 M12.1 7.6 L8 4" stroke="#fff" stroke-opacity="0.62" stroke-width="1.15" fill="none"/></svg><span class="stt">Indefinite</span></span><span class="c c3" style="left:462.6px">https://merchants.ubereats.com/...</span><span class="c c4" style="left:616.2px">restaurants contact</span><span class="c c5" style="left:769.8px">Uber Merchant Support &amp; Conta...</span></div>
<div class="row" style="top:730.2px"><span class="c c0" style="left:2.4px">direct-fr@uber.com</span><span class="c c1" style="left:153.9px"><svg class="env" width="13" height="8.4" viewBox="0 0 13 8.4"><path d="M1.3 0 H11.7 L13 1.3 V7.1 L11.7 8.4 H1.3 L0 7.1 V1.3 Z" fill="#f5cf14"/><path d="M0.9 0.9 L6.5 5 L12.1 0.9 M0.9 7.6 L5 4 M12.1 7.6 L8 4" stroke="#fff" stroke-opacity="0.62" stroke-width="1.15" fill="none"/></svg><span class="stt">Indefinite</span></span><span class="c c3" style="left:462.6px">https://merchants.ubereats.com/...</span><span class="c c4" style="left:616.2px">restaurants contact</span><span class="c c5" style="left:769.8px">Uber Merchant Support &amp; Conta...</span></div>
<div class="row alt" style="top:751.8px"><span class="c c0" style="left:2.4px">partenaires-fr@uber.com</span><span class="c c1" style="left:153.9px"><svg class="env" width="13" height="8.4" viewBox="0 0 13 8.4"><path d="M1.3 0 H11.7 L13 1.3 V7.1 L11.7 8.4 H1.3 L0 7.1 V1.3 Z" fill="#f5cf14"/><path d="M0.9 0.9 L6.5 5 L12.1 0.9 M0.9 7.6 L5 4 M12.1 7.6 L8 4" stroke="#fff" stroke-opacity="0.62" stroke-width="1.15" fill="none"/></svg><span class="stt">Indefinite</span></span><span class="c c3" style="left:462.6px">https://merchants.ubereats.com/...</span><span class="c c4" style="left:616.2px">restaurants contact</span><span class="c c5" style="left:769.8px">Uber Merchant Support &amp; Conta...</span></div>
  </div>
  <div id="vsb">
    <svg class="abs" style="left:3.5px;top:4.5px" width="7" height="4" viewBox="0 0 7 4"><path d="M0 3.6 L3.5 0 L7 3.6 Z" fill="#2a2a2a"/></svg>
    <div class="abs" style="left:0;top:13px;width:14px;height:23.5px;background:#e6e6e6"></div>
    <svg class="abs" style="left:3.5px;top:643px" width="7" height="4" viewBox="0 0 7 4"><path d="M0 0 L3.5 3.6 L7 0 Z" fill="#2a2a2a"/></svg>
  </div>
  <div id="hsb">
    <svg class="abs" style="left:4.5px;top:3.5px" width="4" height="7" viewBox="0 0 4 7"><path d="M3.6 0 L0 3.5 L3.6 7 Z" fill="#2a2a2a"/></svg>
    <div class="abs" style="left:13px;top:0;width:609.5px;height:13.5px;background:#e6e6e6"></div>
    <svg class="abs" style="left:922px;top:3.5px" width="4" height="7" viewBox="0 0 4 7"><path d="M0 0 L3.6 3.5 L0 7 Z" fill="#2a2a2a"/></svg>
  </div>
</div>

<div id="split"><div class="abs" style="left:1.3px;top:317.6px;width:3.6px;height:32.2px;background:#c8c8c8"></div></div>

<div id="panel">
  <div id="tabs">
    <span style="left:6px">Stats</span><span style="left:39px">Log</span><span style="left:67px">Filter</span>
    <div class="abs" style="left:33px;top:21px;width:29px;height:2px;background:#1e9bc3"></div>
  </div>
  <div id="refresh"><span>Refresh</span></div>
  <div id="log">
<div class="ll" style="top:0px">mediarelations@ckr.com validation. Start Time: 4:03:34 PM</div><div class="ll" style="top:12px">Not Enabled : White Listed</div><div class="ll" style="top:24px">Not Enabled : Email Address Blank</div><div class="ll" style="top:36px">Pass : Basic Syntax Check</div><div class="ll" style="top:48px">Not Enabled : Known Domain Ending</div><div class="ll" style="top:60px">Pass : Curse Words Check</div><div class="ll" style="top:72px">Pass : Disposable Email</div><div class="ll" style="top:84px">Not Enabled : Free Email</div><div class="ll" style="top:96px">Not Enabled : Typo Checking</div><div class="ll" style="top:108px">Not Enabled : Fake Email Pattern Match</div><div class="ll" style="top:120px">Not Enabled : Black Listed</div><div class="ll" style="top:132px">Pass : Public Website Exists</div><div class="ll" style="top:144px">Pass : Mail Server Exists</div><div class="ll" style="top:156px">Pass : SMTP Connect</div><div class="ll" style="top:168px">220 mx0a-002e1401.pphosted.com ESMTP pe-m0134199</div><div class="ll" style="top:180px">&gt;EHLO waffle159.thewaffleiron.net</div><div class="ll" style="top:192px">&nbsp;</div><div class="ll" style="top:204px">250-mx0a-002e1401.pphosted.com Hello [89.113.155.54], pleased to meet you</div><div class="ll" style="top:216px">250-ENHANCEDSTATUSCODES</div><div class="ll" style="top:228px">250-PIPELINING</div><div class="ll" style="top:240px">250-8BITMIME</div><div class="ll" style="top:252px">250-SIZE 157286400</div><div class="ll" style="top:264px">250 STARTTLS</div><div class="ll" style="top:276px">&gt;MAIL FROM: &lt;your_real_email@domain.com&gt;</div><div class="ll" style="top:288px">&nbsp;</div><div class="ll" style="top:300px">250 2.1.0 Sender ok</div><div class="ll" style="top:312px">&gt;RCPT TO: &lt;mediarelations@ckr.com&gt;</div><div class="ll" style="top:324px">&nbsp;</div><div class="ll" style="top:336px">250 2.1.5 Recipient ok</div><div class="ll" style="top:348px">Pass : Mailbox Check</div><div class="ll" style="top:360px">Pass : SMTP Connect</div><div class="ll" style="top:372px">220 mx0a-002e1401.pphosted.com ESMTP pe-m0134199</div><div class="ll" style="top:384px">&gt;EHLO waffle159.thewaffleiron.net</div><div class="ll" style="top:396px">&nbsp;</div><div class="ll" style="top:408px">250-mx0a-002e1401.pphosted.com Hello [89.113.155.54], pleased to meet you</div><div class="ll" style="top:420px">250-ENHANCEDSTATUSCODES</div><div class="ll" style="top:432px">250-PIPELINING</div><div class="ll" style="top:444px">250-8BITMIME</div><div class="ll" style="top:456px">250-SIZE 157286400</div><div class="ll" style="top:468px">250 STARTTLS</div><div class="ll" style="top:480px">&gt;MAIL FROM: &lt;your_real_email@domain.com&gt;</div><div class="ll" style="top:492px">&nbsp;</div><div class="ll" style="top:504px">250 2.1.0 Sender ok</div><div class="ll" style="top:516px">&gt;RCPT TO: &lt;g6404fd2246f64c099f8b6a7561c1fb47@ckr.com&gt;</div><div class="ll" style="top:528px">&nbsp;</div><div class="ll" style="top:540px">250 2.1.5 Recipient ok</div><div class="ll" style="top:552px">Pass : Mailbox Check</div><div class="ll" style="top:564px">&nbsp;</div><div class="ll" style="top:576px">Pass : Catch All Domain Check</div><div class="ll" style="top:588px">End Time: 4:03:37 PM</div>
    <div class="abs" style="left:551.7px;top:2px;width:12.2px;height:600px;background:#f0f0f0">
      <svg class="abs" style="left:2.6px;top:5px" width="7" height="5" viewBox="0 0 7 5"><path d="M0.6 4.2 L3.5 1.1 L6.4 4.2" fill="none" stroke="#404040" stroke-width="1.5"/></svg>
      <div class="abs" style="left:0;top:13.5px;width:12.2px;height:509px;background:#c8c8c8"></div>
      <svg class="abs" style="left:2.6px;top:589px" width="7" height="5" viewBox="0 0 7 5"><path d="M0.6 0.8 L3.5 3.9 L6.4 0.8" fill="none" stroke="#404040" stroke-width="1.5"/></svg>
    </div>
  </div>
</div>

<div id="status">
  <span class="abs" style="left:5px;top:7px;font-size:10.2px;color:#202020;transform:scaleX(0.87);transform-origin:0 0;white-space:nowrap">Ready.</span>
  <span class="abs" style="left:1402px;top:7px;font-size:10.2px;color:#2a9e3c;transform:scaleX(0.9);transform-origin:0 0;white-space:nowrap">Port 25 is open</span>
  <div class="abs" style="left:1526px;top:14px;width:8px;height:8px;border-right:1.5px solid #c4c4c4;border-bottom:1.5px solid #c4c4c4"></div>
</div>

<div id="ctx">
  <div class="ic"></div>
  <span class="mi" style="top:4.5px">Select all</span>
  <span class="mi" style="top:23.5px">Invert selection</span>
  <div class="sep" style="top:39.5px"></div>
  <span class="mi" style="top:46.5px">Copy emails</span>
  <span class="mi" style="top:65.5px">Insert..</span>
  <div class="sep" style="top:81.5px"></div>
  <div class="hl"></div>
  <span class="mi" style="top:88.5px">Change status (selected)</span>
  <svg class="abs" style="left:146px;top:92px" width="4" height="7" viewBox="0 0 4 7"><path d="M0 0 L3.5 3.5 L0 7 Z" fill="#111"/></svg>
  <div class="sep" style="top:104.5px"></div>
  <span class="mi" style="top:111.5px">Remove</span>
  <svg class="abs" style="left:146px;top:115px" width="4" height="7" viewBox="0 0 4 7"><path d="M0 0 L3.5 3.5 L0 7 Z" fill="#111"/></svg>
  <svg class="abs" style="left:2.5px;top:131px" width="12" height="11" viewBox="0 0 12 11"><path d="M1.8 1.5 L10.2 9.5 M10.2 1.5 L1.8 9.5" stroke="#e8401c" stroke-width="2.6" stroke-linecap="round"/></svg>
  <span class="mi" style="top:130.5px">Remove selected</span>
</div>

<div id="sub">
  <div class="ic"></div>
  <span class="abs" style="left:2.2px;top:4.6px"><svg class="env" width="13" height="8.4" viewBox="0 0 13 8.4"><path d="M1.3 0 H11.7 L13 1.3 V7.1 L11.7 8.4 H1.3 L0 7.1 V1.3 Z" fill="#7a7a7a"/><path d="M0.9 0.9 L6.5 5 L12.1 0.9 M0.9 7.6 L5 4 M12.1 7.6 L8 4" stroke="#fff" stroke-opacity="0.62" stroke-width="1.15" fill="none"/></svg></span>
  <span class="si" style="top:4.5px">Not verified</span>
  <span class="abs" style="left:2.2px;top:23.8px"><svg class="env" width="13" height="8.4" viewBox="0 0 13 8.4"><path d="M1.3 0 H11.7 L13 1.3 V7.1 L11.7 8.4 H1.3 L0 7.1 V1.3 Z" fill="#1aab1a"/><path d="M0.9 0.9 L6.5 5 L12.1 0.9 M0.9 7.6 L5 4 M12.1 7.6 L8 4" stroke="#fff" stroke-opacity="0.62" stroke-width="1.15" fill="none"/></svg></span>
  <span class="si" style="top:23.5px">Valid</span>
  <span class="abs" style="left:2.2px;top:42.8px"><svg class="env" width="13" height="8.4" viewBox="0 0 13 8.4"><path d="M1.3 0 H11.7 L13 1.3 V7.1 L11.7 8.4 H1.3 L0 7.1 V1.3 Z" fill="#ff5b5b"/><path d="M0.9 0.9 L6.5 5 L12.1 0.9 M0.9 7.6 L5 4 M12.1 7.6 L8 4" stroke="#fff" stroke-opacity="0.62" stroke-width="1.15" fill="none"/></svg></span>
  <span class="si" style="top:42.5px">Invalid</span>
  <span class="abs" style="left:2.2px;top:62.2px"><svg class="env" width="13" height="8.4" viewBox="0 0 13 8.4"><path d="M1.3 0 H11.7 L13 1.3 V7.1 L11.7 8.4 H1.3 L0 7.1 V1.3 Z" fill="#f5cf14"/><path d="M0.9 0.9 L6.5 5 L12.1 0.9 M0.9 7.6 L5 4 M12.1 7.6 L8 4" stroke="#fff" stroke-opacity="0.62" stroke-width="1.15" fill="none"/></svg></span>
  <span class="si" style="top:61.5px">Indefinite</span>
  <span class="abs" style="left:2.2px;top:81.2px"><svg class="env" width="13" height="8.4" viewBox="0 0 13 8.4"><path d="M1.3 0 H11.7 L13 1.3 V7.1 L11.7 8.4 H1.3 L0 7.1 V1.3 Z" fill="#ff5b5b"/><path d="M0.9 0.9 L6.5 5 L12.1 0.9 M0.9 7.6 L5 4 M12.1 7.6 L8 4" stroke="#fff" stroke-opacity="0.62" stroke-width="1.15" fill="none"/></svg></span>
  <span class="si" style="top:80.5px">Disposable</span>
</div>

</body></html>
